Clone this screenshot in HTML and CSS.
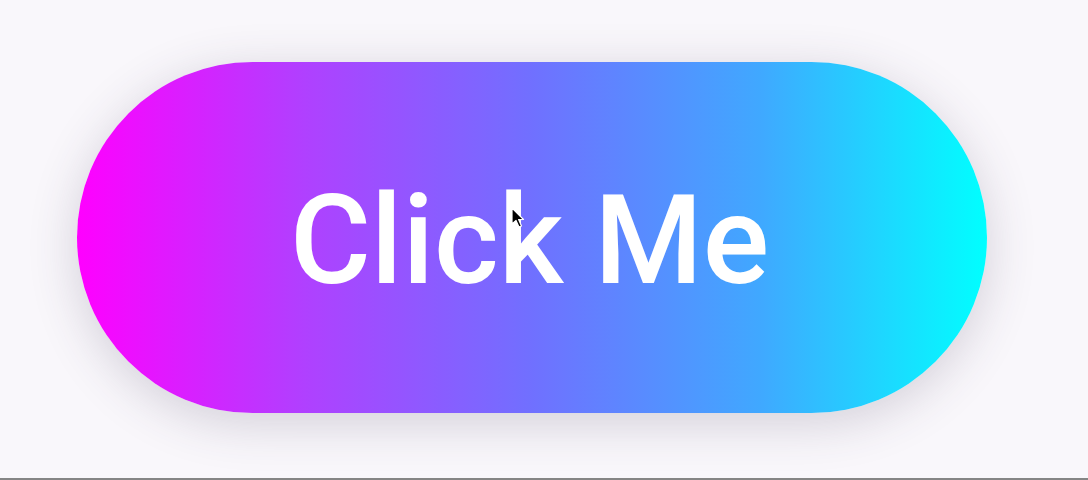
FILE: index.html
```html
<!DOCTYPE html>
<html>
<head>
<meta charset="utf-8">
<link rel="stylesheet" href="styles.css">
</head>
<body>
<main class="stage">
  <button class="pill">Click Me</button>
  <svg class="cursor" width="16" height="24" viewBox="0 0 16 24"><path d="M1 1 L1 17 L5 13.5 L8 20 L10.5 19 L7.6 12.6 L12.5 12.5 Z" fill="#000" stroke="#fff" stroke-width="1.2" stroke-linejoin="round"/></svg>
</main>
</body>
</html>
```
FILE: styles.css
```css
html, body {
  margin: 0;
  padding: 0;
  background: #f9f7fb;
}
.stage {
  position: relative;
  height: 480px;
  border-bottom: 2px solid #858585;
  padding: 62px 0 0 77px;
  box-sizing: border-box;
}
.pill {
  display: flex;
  align-items: center;
  justify-content: center;
  width: 910px;
  height: 351px;
  border: none;
  border-radius: 176px;
  background: linear-gradient(90deg, #ff00ff 0%, #b040ff 25%, #7070ff 50%, #40a8ff 75%, #00ffff 100%);
  box-shadow: 0 10px 50px rgba(60, 50, 80, 0.2);
  color: #fff;
  font-family: Roboto, "Liberation Sans", sans-serif;
  font-size: 124px;
  font-weight: 500;
  padding: 5px 5px 0 0;
  cursor: pointer;
}
.cursor {
  position: absolute;
  left: 511px;
  top: 207px;
}
```
